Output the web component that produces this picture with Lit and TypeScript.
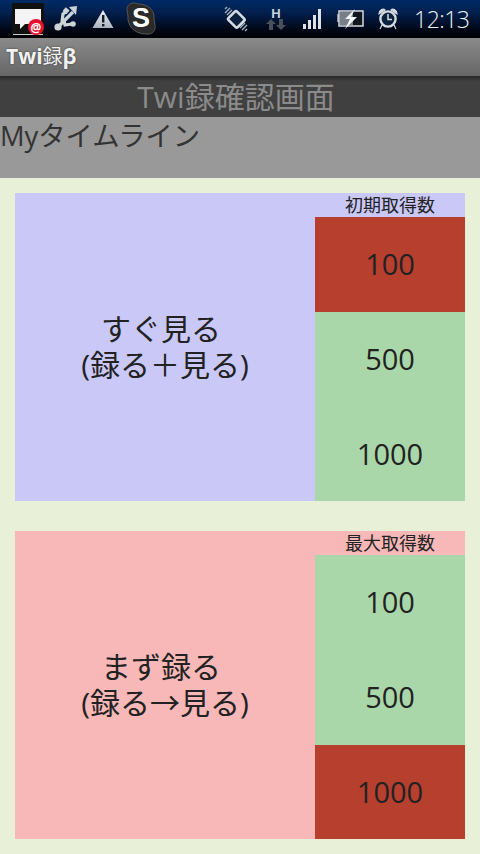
import { LitElement, html, css } from "lit";
import { customElement } from "lit/decorators.js";

@customElement("choice-card")
class ChoiceCard extends LitElement {
  static properties = {
    tone: { type: String },
    caption: { type: String },
    first: { type: String },
    second: { type: String },
    selected: { type: Number },
  };
  tone = "blue";
  caption = "";
  first = "";
  second = "";
  selected = 0;

  static styles = css`
    :host { display: block; }
    .card { display: grid; grid-template-columns: 300px 150px; height: 308px; color: #222; }
    .blue { background: #c9c8f7; }
    .pink { background: #f8b8b8; }
    .main { display: flex; flex-direction: column; align-items: center; justify-content: center; font-size: 30px; line-height: 36px; text-align: center; }
    .lead { padding-right: 8px; }
    .side { display: grid; grid-template-rows: 24px 95px 95px 94px; }
    .cap { font-size: 18px; line-height: 25px; text-align: center; white-space: nowrap; }
    .opt { display: flex; align-items: center; justify-content: center; font-size: 29px; padding-bottom: 2px; box-sizing: border-box; background: #aad7a9; color: #222; }
    .opt.on { background: #b73f2e; }
  `;

  render() {
    return html`<div class="card ${this.tone}">
      <div class="main"><span class="lead">${this.first}</span><span>${this.second}</span></div>
      <div class="side">
        <div class="cap">${this.caption}</div>
        ${[100, 500, 1000].map(
          (n, i) => html`<div class="opt ${i === this.selected ? "on" : ""}">${n}</div>`
        )}
      </div>
    </div>`;
  }
}

@customElement("status-bar")
class StatusBar extends LitElement {
  static styles = css`
    :host { display: block; }
    .bar { height: 38px; display: flex; align-items: center; background: linear-gradient(#012a66 0, #02204f 12px, #000c22 26px, #000 38px); color: #e6e6e6; box-sizing: border-box; }
    svg { display: block; flex: none; }
    .left { display: flex; align-items: center; }
    .right { margin-left: auto; display: flex; align-items: center; }
    .time { font-size: 23px; font-weight: 300; letter-spacing: -0.5px; color: #f2f2f2; width: 56px; margin: 0 10px 0 16px; white-space: nowrap; }
    .msg { margin-left: 12px; }
    .usb { margin-left: 8px; }
    .warn { margin-left: 14px; }
    .sk { margin-left: 12px; }
    .h { margin-left: 17px; }
    .sig { margin-left: 16px; }
    .bat { margin-left: 15px; }
    .alarm { margin-left: 14px; }
  `;
  render() {
    return html`<div class="bar">
      <div class="left">
        <svg class="msg" width="34" height="36" viewBox="0 0 34 36">
          <rect x="0" y="2" width="32" height="31" fill="#111"/>
          <rect x="1" y="33" width="30" height="1" fill="#ccc"/>
          <path d="M3 8h26v15H13l-5 5v-5H3z" fill="#f4f4f4"/>
          <circle cx="24" cy="26" r="8" fill="#e8112d"/>
          <text x="24" y="30.5" text-anchor="middle" font-size="12" font-weight="700" fill="#fff" font-family="Open Sans">@</text>
        </svg>
        <svg class="usb" width="24" height="26" viewBox="0 0 24 26">
          <g fill="none" stroke="#cdd4d8" stroke-width="3.2">
            <path d="M3 22 L19 6"/><path d="M8 16 L9 8 L12 6"/><path d="M10 15 L11 19 L18 18"/>
          </g>
          <path d="M15 1 L23 0 L22 9z" fill="#cdd4d8"/>
          <circle cx="4" cy="21" r="3.6" fill="#cdd4d8"/>
          <rect x="10" y="2" width="5" height="5" transform="rotate(40 12 4)" fill="#cdd4d8"/>
          <circle cx="19" cy="18" r="2.8" fill="#cdd4d8"/>
        </svg>
        <svg class="warn" width="22" height="20" viewBox="0 0 22 20">
          <defs><linearGradient id="w" x1="0" y1="0" x2="0" y2="1"><stop offset="0" stop-color="#f2f2f2"/><stop offset="1" stop-color="#aab4bd"/></linearGradient></defs>
          <path d="M11 1 L21.5 19 H.5z" fill="url(#w)"/>
          <rect x="10" y="6" width="2.4" height="7.5" fill="#0a1a33"/>
          <rect x="10" y="15" width="2.4" height="2.4" fill="#0a1a33"/>
        </svg>
        <svg class="sk" width="30" height="34" viewBox="0 0 30 34">
          <path d="M8 1 C3 1 1 4 1 8 C1 10 2 12 2 14 C1 22 7 32 20 32 C27 33 30 28 29 23 C29 21 28 19 28 17 C29 8 22 2 12 2 C10 1 9 1 8 1z" fill="#2a2a2a" stroke="#555" stroke-width="1"/>
          <text x="15" y="25" text-anchor="middle" font-size="27" font-weight="700" fill="#fff" font-family="Liberation Sans">S</text>
        </svg>
      </div>
      <div class="right">
        <svg width="24" height="26" viewBox="0 0 24 26">
          <rect x="6" y="7" width="12" height="13" rx="1.5" transform="rotate(-45 12 13)" fill="#0b2140" stroke="#d6dde2" stroke-width="2.6"/>
          <path d="M1 7 L6 2 M3 9 L8 4 M1 3 L3 1 M23 19 L18 24 M21 17 L16 22 M23 23 L21 25" stroke="#a3adb5" stroke-width="1.4"/>
        </svg>
        <svg class="h" width="22" height="24" viewBox="0 0 22 24">
          <text x="11" y="11" text-anchor="middle" font-size="13" font-weight="700" fill="#c9d2dc" font-family="Liberation Sans">H</text>
          <path d="M6 12 L11 17 H8 V23 H4 V17 H1z M16 23 L21 18 H18 V12 H14 V18 H11z" fill="#4a5058"/>
        </svg>
        <svg class="sig" width="19" height="22" viewBox="0 0 19 22">
          <rect x="0" y="16" width="3" height="5" fill="#dfe3e6"/>
          <rect x="5" y="12" width="3" height="9" fill="#dfe3e6"/>
          <rect x="10" y="7" width="3" height="14" fill="#dfe3e6"/>
          <rect x="15" y="1" width="3" height="20" fill="#dfe3e6"/>
        </svg>
        <svg class="bat" width="27" height="20" viewBox="0 0 27 20">
          <rect x="0" y="5" width="2" height="8" fill="#8b9096"/>
          <rect x="2" y="2" width="24" height="15" fill="#11161c" stroke="#e4e7ea" stroke-width="1.4"/>
          <rect x="3" y="3" width="13" height="13" fill="#77808a"/>
          <path d="M18 0 L8 10 H13 L8 20 L20 8 H14z" fill="#f4f5f6"/>
        </svg>
        <svg class="alarm" width="20" height="22" viewBox="0 0 20 22">
          <path d="M1 6 C1 2 5 0 7 2z M19 6 C19 2 15 0 13 2z M4 17 L2 21 M16 17 L18 21" fill="#d8dcdf" stroke="#d8dcdf" stroke-width="1.2"/>
          <circle cx="10" cy="11" r="7.6" fill="#0b2140" stroke="#d8dcdf" stroke-width="2.4"/>
          <path d="M10 6 V11.5 H14" fill="none" stroke="#d8dcdf" stroke-width="1.5"/>
        </svg>
        <span class="time">12:13</span>
      </div>
    </div>`;
  }
}

@customElement("app-root")
class AppRoot extends LitElement {
  static styles = css`
    :host { display: block; width: 480px; height: 854px; background: #e8f0d8; font-family: "Open Sans", "Noto Sans CJK JP", sans-serif; overflow: hidden; }
    .titlebar { height: 39px; box-sizing: border-box; padding: 0 0 3px 6px; display: flex; align-items: center; background: linear-gradient(#8a8a8a, #666); border-bottom: 1px solid #2a2a2a; color: #f2f2f2; font-size: 21px; font-weight: 700; text-shadow: 0 0 2px #333; }
    .thin { font-weight: 400; font-size: 20px; }
    .heading { height: 40px; box-sizing: border-box; padding: 0 8px 4px 0; display: flex; align-items: center; justify-content: center; background: linear-gradient(#2e2e2e, #404040 4px); color: #8b8b8b; font-size: 30px; }
    .source { height: 61px; background: #999; color: #333; font-size: 27.3px; line-height: 38px; }
    .content { padding: 15px; display: flex; flex-direction: column; gap: 30px; }
  `;
  render() {
    return html`
      <status-bar></status-bar>
      <div class="titlebar"><span>Twi<span class="thin">録</span>β</span></div>
      <div class="heading">Twi録確認画面</div>
      <div class="source">Myタイムライン</div>
      <div class="content">
        <choice-card tone="blue" caption="初期取得数" first="すぐ見る" second="(録る＋見る)" selected="0"></choice-card>
        <choice-card tone="pink" caption="最大取得数" first="まず録る" second="(録る→見る)" selected="2"></choice-card>
      </div>
    `;
  }
}
void ChoiceCard; void StatusBar; void AppRoot;
